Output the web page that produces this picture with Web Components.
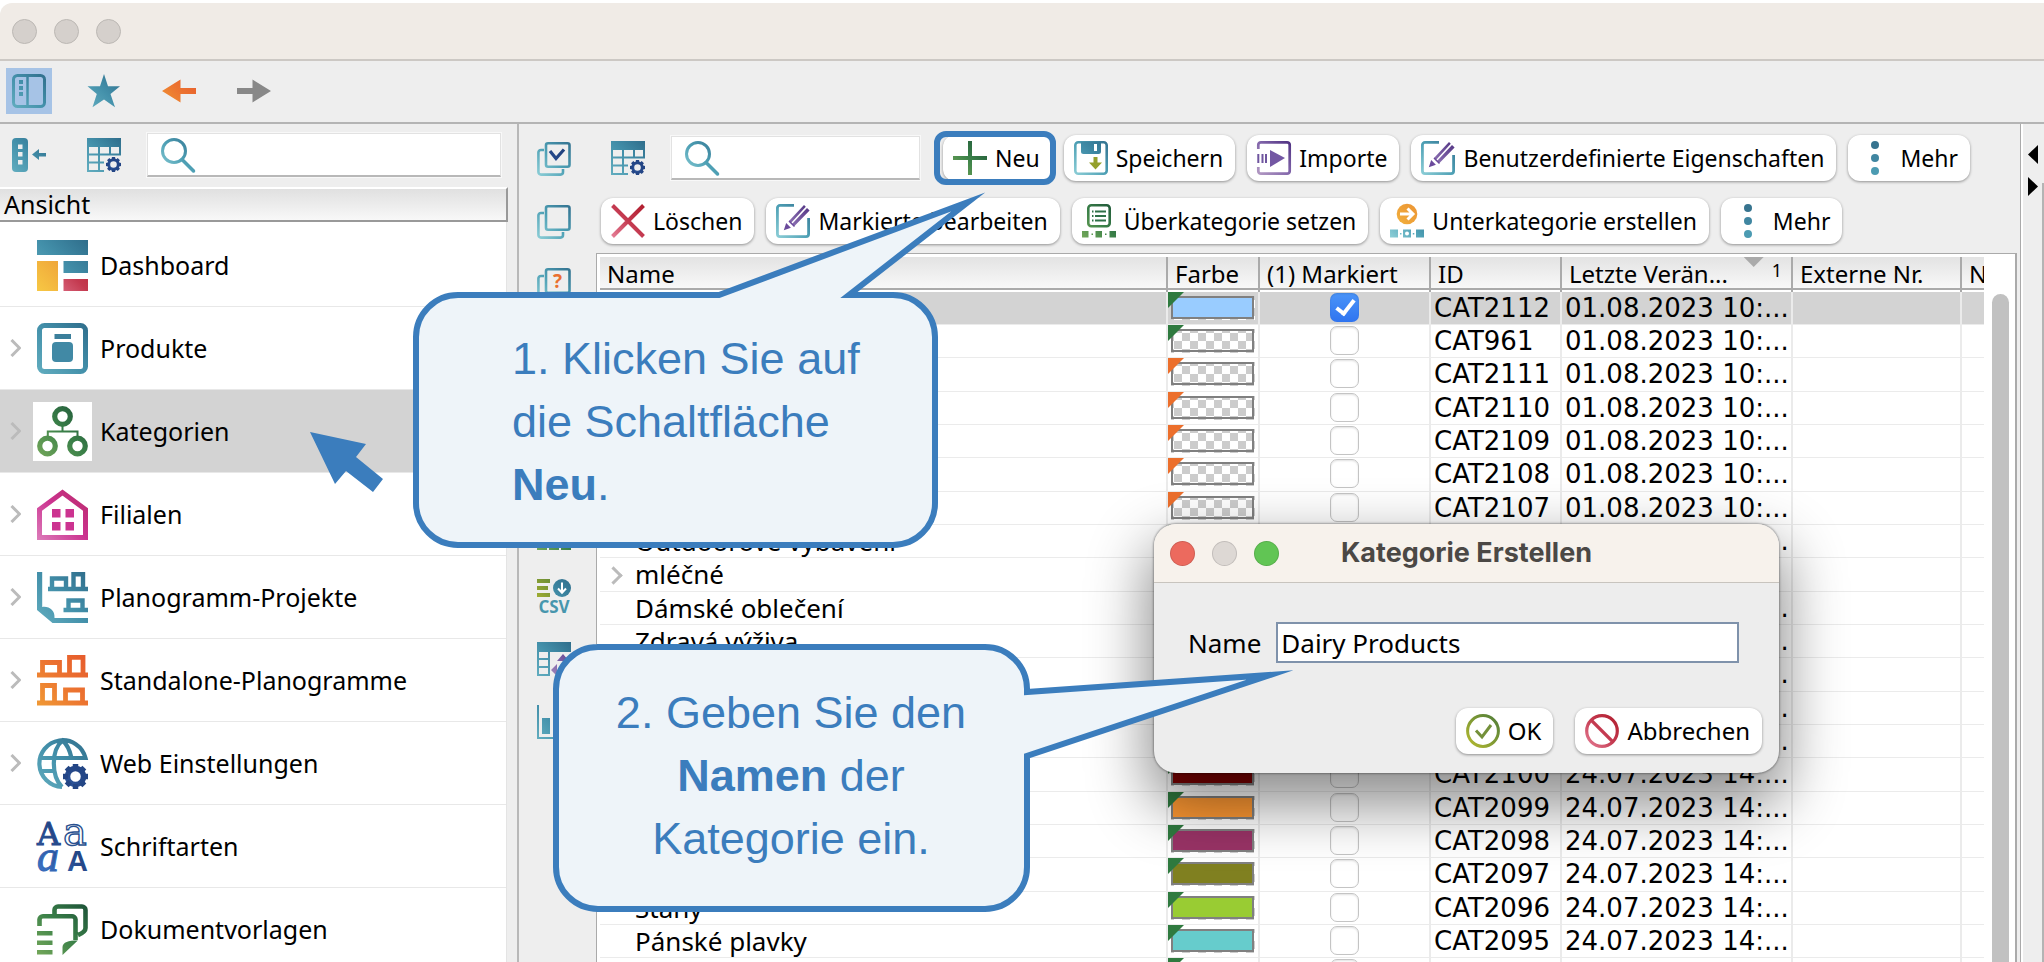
<!DOCTYPE html>
<html lang="de">
<head>
<meta charset="utf-8">
<title>Kategorien</title>
<style>
html, body {
  height: 100%;
  margin: 0;
}
body {
  overflow: hidden;
  background: #fff;
  color: #000;
  font: 25px/32px "Noto Sans", "Open Sans", sans-serif;
}
</style>
</head>
<body>
<app-window>
  <nav-tree slot="nav">
    <nav-item icon="dashboard" leaf>Dashboard</nav-item>
    <nav-item icon="products">Produkte</nav-item>
    <nav-item icon="categories" selected>Kategorien</nav-item>
    <nav-item icon="stores">Filialen</nav-item>
    <nav-item icon="projects">Planogramm-Projekte</nav-item>
    <nav-item icon="standalone">Standalone-Planogramme</nav-item>
    <nav-item icon="web">Web Einstellungen</nav-item>
    <nav-item icon="fonts" leaf>Schriftarten</nav-item>
    <nav-item icon="documents" leaf>Dokumentvorlagen</nav-item>
  </nav-tree>
  <category-panel slot="main"></category-panel>
</app-window>
<category-dialog></category-dialog>
<click-arrow></click-arrow>
<callout-bubble tail="up">1. Klicken Sie auf<br>die Schaltfläche<br><b>Neu</b>.</callout-bubble>
<callout-bubble tail="right">2. Geben Sie den<br><b>Namen</b> der<br>Kategorie ein.</callout-bubble>

<script>
const GEAR = (cx, cy, r, width) => {
  const teeth = [];
  for (let i = 0; i < 8; i++) {
    teeth.push(`<rect x="${cx - r * 0.22}" y="${cy - r}" width="${r * 0.44}" height="${r * 0.4}" transform="rotate(${i * 45} ${cx} ${cy})" fill="url(#navy)"/>`);
  }
  return `<circle cx="${cx}" cy="${cy}" r="${r * 0.64}" fill="none" stroke="url(#navy)" stroke-width="${width}"/>${teeth.join('')}`;
};

const COPIES = `
  <path d="M7 8H4a2.600 2.600 0 0 0-2.600 2.600V30A2.600 2.600 0 0 0 4 32.600H23.500A2.600 2.600 0 0 0 26 30V27" fill="none" stroke="url(#aqua)" stroke-width="2.600"/>
  <rect x="9" y="1.300" width="23.500" height="23.500" rx="2" fill="none" stroke="url(#aqua)" stroke-width="2.600"/>`;

const PENCIL_BOX = `
  <path d="M18 1.400H4A2.600 2.600 0 0 0 1.400 4V30A2.600 2.600 0 0 0 4 32.600H30A2.600 2.600 0 0 0 32.600 30V14" fill="none" stroke="url(#aqua)" stroke-width="2.800"/>
  <path d="M13 17 28 1l1.800 1.800L15 19z M16 20 31 4l2.600 2.600L18.500 22z" fill="url(#purple)"/>
  <path d="M13 17l5.500 5.500M9 25l1.500-4.500 3 3z" stroke="#6b4a9c" stroke-width="1.500" fill="#6b4a9c"/>`;

const SHELVES = `
  <path d="M5.500 20V7.500H22.500V20M32.500 20V2.300H46V20" stroke-width="4.800"/>
  <path d="M0 20H51" stroke-width="5"/>
  <path d="M5.500 47V30.500H17.500V47M28.500 47V35H45.500V47" stroke-width="4.800"/>
  <path d="M0 48H51" stroke-width="5"/>`;

// 34 unit icons are used by toolbars, 51 unit icons by the tree
const ICONS = {
  panel: [34, `<rect x="1.500" y="1.500" width="31" height="31" rx="4" fill="none" stroke="url(#teal)" stroke-width="3"/>
    <path d="M15.500 2V32" stroke="url(#teal)" stroke-width="2.500"/>
    <path d="M7 6h4v4H7zM7 12h4v4H7zM7 18h4v4H7z" fill="url(#teal)"/>`],
  star: [34, `<path d="M17 0l4 12.200h12L23.500 20l4.500 13.200-11-7.700-11.500 7.700L9.800 20 .5 12.200H13z" fill="url(#teal)"/>`],
  back: [34, `<path d="M0 17 18.500 5.500V14H34v6H18.500v8.500z" fill="url(#orange)"/>`],
  forward: [34, `<path d="M34 17 15.500 5.500V14H0v6H15.500v8.500z" fill="#888"/>`],
  collapse: [34, `<rect width="16" height="34" rx="4" fill="url(#teal)"/>
    <path d="M6 6.500h4.500V11H6zM6 14h4.500v4.500H6zM6 22h4.500v4.500H6z" fill="#eee"/>
    <path d="M20 16.500l7-5.500v4h7v3.500h-7V22z" fill="url(#teal)"/>`],
  columns: [34, `<path d="M0 0H34V9H0z" fill="url(#teal)"/>
    <path d="M1 8V33H17M12 8V33M23 8V16.500M33 8V16.500H1M1 24.500H17" fill="none" stroke="url(#teal)" stroke-width="2"/>
    ${GEAR(26.500, 26.500, 7.500, 3)}`],
  search: [34, `<circle cx="13" cy="13" r="11.500" fill="none" stroke="url(#aqua)" stroke-width="3"/>
    <path d="M21 21.500 32.500 33" stroke="url(#aqua)" stroke-width="3.500" stroke-linecap="round"/>`],
  marked: [34, `${COPIES}<path d="M13 9l6 7.500 8-9" fill="none" stroke="url(#navy)" stroke-width="3.200"/>`],
  copies: [34, COPIES],
  unknown: [34, `${COPIES}<text x="20.500" y="20" text-anchor="middle" font-family="Open Sans" font-weight="700" font-size="19" fill="#ea7030">?</text>`],
  boxes: [34, `<rect x="5" y="1" width="23" height="19" rx="2" fill="none" stroke="url(#green)" stroke-width="2.500"/>
    <path d="M0 24h10v10H0zM12 24h10v10H12zM24 24h10v10H24z" fill="url(#green)"/>`],
  csv: [34, `<path d="M0 0H13V4H0zM0 7H11V11H0zM0 14H13V18H0z" fill="url(#olive)"/>
    <circle cx="25" cy="9" r="9" fill="url(#teal)"/>
    <path d="M25 3.500V13M21 9.500l4 4.200 4-4.200" fill="none" stroke="#fff" stroke-width="2"/>
    <text x="17" y="34" text-anchor="middle" font-family="Open Sans" font-weight="700" font-size="17" fill="#4796ad">CSV</text>`],
  layout: [34, `<path d="M0 0H34V10H0z" fill="url(#teal)"/>
    <path d="M1 9V33H12V9M1 17H12M1 25H12" fill="none" stroke="url(#teal)" stroke-width="2"/>
    <path d="M14 28l6-6v12zM26 12l6 7H20zM38 28l-6-6v12z" fill="url(#purple)"/>`],
  chart: [34, `<path d="M1 0V33H34" fill="none" stroke="url(#teal)" stroke-width="2"/>
    <path d="M5 13h8v16H5zM16 5h8v24h-8z" fill="url(#teal)"/>`],
  plus: [34, `<path d="M15 0H19V15H34V19H19V34H15V19H0V15H15z" fill="url(#green)"/>`],
  delete: [34, `<path d="M1.500 1.500 32.500 32.500M32.500 1.500 1.500 32.500" stroke="url(#red)" stroke-width="4"/>`],
  edit: [34, PENCIL_BOX],
  save: [34, `<rect x="1.300" y="1.300" width="31.400" height="31.400" rx="3" fill="none" stroke="url(#aqua)" stroke-width="2.600"/>
    <path d="M7 1H27V10.500A2.500 2.500 0 0 1 24.500 13H9.500A2.500 2.500 0 0 1 7 10.500z" fill="url(#teal)"/>
    <path d="M20 3h3v7h-3z" fill="#fff"/>
    <path d="M19.500 16h4v5.500H28L21.500 28.500 15 21.500h4.500z" fill="#94a02c"/>`],
  import: [34, `<path d="M1.300 8V4A2.600 2.600 0 0 1 4 1.300H30A2.600 2.600 0 0 1 32.700 4V30A2.600 2.600 0 0 1 30 32.700H4A2.600 2.600 0 0 1 1.300 30V26" fill="none" stroke="url(#purple)" stroke-width="2.700"/>
    <path d="M1.300 13V22M5.500 13V22M9 13V22" stroke="#6f559f" stroke-width="2"/>
    <path d="M13 9 28 17 13 26z" fill="#7357a3"/>`],
  dots: [34, `<circle cx="17" cy="4" r="4" fill="#37748f"/><circle cx="17" cy="17" r="4" fill="#4086a1"/><circle cx="17" cy="30" r="4" fill="#4c9bb2"/>`],
  parent: [34, `<rect x="6.300" y="1.300" width="21.400" height="21" rx="3" fill="none" stroke="url(#green)" stroke-width="2.600"/>
    <path d="M13 7.500H24M13 12H24M13 16.500H24M10 7.500h1.500M10 12h1.500M10 16.500h1.500" stroke="#2f7048" stroke-width="2"/>
    <path d="M0 27h6.500v6.500H0zM13.500 27H20v6.500h-6.500zM27.500 27H34v6.500h-6.500zM9.500 29.500h1.500V31H9.500zM23 29.500h1.500V31H23z" fill="url(#green)"/>`],
  child: [34, `<circle cx="17" cy="10" r="10.300" fill="url(#amber)"/>
    <path d="M10 10H22M17.500 4.500 23 10l-5.500 5.500" fill="none" stroke="#fff" stroke-width="3"/>
    <path d="M0 25.500h8v8H0zM13 25.500h8v8H13zM26 25.500h8v8H26zM10 29h1.500v1.500H10zM22.800 29h1.500v1.500h-1.500z" fill="url(#aqua)"/>
    <circle cx="17" cy="29.500" r="2" fill="#fff"/>`],
  ok: [34, `<circle cx="17" cy="17" r="15.400" fill="none" stroke="url(#olive)" stroke-width="3"/>
    <path d="M10 16.500l6 6.500 9-12" fill="none" stroke="#74903a" stroke-width="3"/>`],
  cancel: [34, `<circle cx="17" cy="17" r="15.300" fill="none" stroke="url(#red)" stroke-width="3.200"/>
    <path d="M6.500 6.500 27.500 27.500" stroke="url(#red)" stroke-width="3.200"/>`],

  dashboard: [51, `<path d="M0 0H51V15H0zM26.500 21H51V33H26.500z" fill="url(#teal)"/>
    <path d="M0 21H21V51H0z" fill="url(#amber)"/><path d="M26.500 39H51V51H26.500z" fill="url(#red)"/>`],
  products: [51, `<rect x="2.500" y="2.500" width="46" height="46" rx="5" fill="none" stroke="url(#teal)" stroke-width="5"/>
    <path d="M17.500 11h16.500v5H17.500z" fill="#3b7f9b"/><rect x="15" y="19" width="21" height="20" rx="4" fill="#4189a5"/>`],
  categories: [51, `<g fill="none" stroke="url(#green)"><path d="M25.500 19V25.500M10.800 32V25.500H40.500V32" stroke-width="2"/>
    <circle cx="25.500" cy="10.500" r="7.800" stroke-width="5.200"/><circle cx="10.500" cy="40" r="7.800" stroke-width="5.200"/><circle cx="40.500" cy="40" r="7.800" stroke-width="5.200"/></g>`],
  stores: [51, `<path d="M2.500 48.500V20.500L25.500 3.500 48.500 20.500V48.500z" fill="none" stroke="url(#pink)" stroke-width="5"/>
    <path d="M15 20h8.500v8.500H15zM28.500 20H37v8.500h-8.500zM15 33h8.500v8.500H15zM28.500 33H37v8.500h-8.500z" fill="#cc3390"/>`],
  projects: [51, `<path d="M0 0H5.200V35C12 34 18 38 17.500 46H51V51H15.500L0 38z" fill="url(#teal)"/>
    <g fill="none" stroke="url(#teal)"><path d="M15 15V6.500H29V15M36.500 15V2.300H46V15M31.500 36V28.500H45.500V36" stroke-width="4.400"/>
    <path d="M11 17H51M26.500 38H51" stroke-width="4.500"/></g>`],
  standalone: [51, `<g fill="none" stroke="url(#orange)">${SHELVES}</g>`],
  web: [51, `<g fill="none" stroke="url(#teal)" stroke-width="4.200"><path d="M25 49A23.400 23.400 0 1 1 48.500 20H3.500M3 33H16.500M25 49C14 38 14 12 25.500 2.500C31 7 33 13 34.500 20"/></g>
    ${GEAR(38.500, 38.500, 12.500, 5.500)}`],
  fonts: [51, `<g fill="url(#navy)"><text x="0" y="23.500" font-family="DejaVu Serif" font-size="32" stroke="#25488a">A</text>
    <text x="26" y="23.500" font-family="DejaVu Serif" font-size="40" fill="none" stroke="#28508f" stroke-width="1.400">a</text>
    <text x="0" y="50" font-family="Liberation Serif" font-style="italic" font-size="44" stroke="#3569b8">a</text>
    <text x="30" y="50" font-family="Liberation Sans" font-weight="700" font-size="29">A</text></g>`],
  documents: [51, `<g fill="none" stroke="url(#green)" stroke-width="4.600"><path d="M17.500 11V6A3.500 3.500 0 0 1 21 2.500H45A3.500 3.500 0 0 1 48.500 6V24Q48.500 28 41 31M2.500 22V15.500A3.500 3.500 0 0 1 6 12.300H34.500A3.500 3.500 0 0 1 38.500 15.500V36"/></g>
    <path d="M0 27H15.500V31.500H0zM0 36.500H15.500V41H0zM0 46H15.500V50.500H0zM25.500 51V43C26 38 31 36.500 40.800 36.500z" fill="url(#green)"/>`],
};

const GRADIENTS = {
  teal: ['#2f6d8b', '#4390aa', '#62adbf'],
  aqua: ['#33718f', '#4d9fb4', '#8fd0d8'],
  navy: ['#1d3c72', '#25488a', '#3e78cc'],
  purple: ['#4d2f80', '#8367ab', '#b59cc4'],
  orange: ['#e65a2c', '#ec7430', '#f09a35'],
  amber: ['#eb9033', '#efa63a', '#f7c844'],
  red: ['#b01c2c', '#c43a50', '#e8849c'],
  green: ['#1d5238', '#3a8048', '#74a85a'],
  olive: ['#4a7a3a', '#809a34', '#bcbe30'],
  pink: ['#b82a68', '#cc3390', '#dc7cba'],
};

class UiIcon extends HTMLElement {
  constructor() {
    super();
    this.attachShadow({ mode: 'open' });
  }
  connectedCallback() {
    const [size, shapes] = ICONS[this.getAttribute('name')];
    const defs = Object.entries(GRADIENTS).map(([id, [from, mid, to]]) => `
      <linearGradient id="${id}" gradientUnits="userSpaceOnUse" x1="${size}" y1="0" x2="0" y2="${size}">
        <stop offset="0" stop-color="${from}"/><stop offset=".5" stop-color="${mid}"/><stop offset="1" stop-color="${to}"/>
      </linearGradient>`).join('');
    this.shadowRoot.innerHTML = `
      <style>
      :host {
        display: block;
        flex: none;
      }
      svg {
        display: block;
        overflow: visible;
      }
      </style>
      <svg width="${size}" height="${size}" viewBox="0 0 ${size} ${size}" aria-hidden="true"><defs>${defs}</defs>${shapes}</svg>`;
  }
}
customElements.define('ui-icon', UiIcon);

// attaches an open shadow root holding a copy of the class's template
class TemplateElement extends HTMLElement {
  constructor() {
    super();
    const templateEl = document.createElement('template');
    templateEl.innerHTML = this.constructor.html;
    this.attachShadow({ mode: 'open' }).append(templateEl.content.cloneNode(true));
  }
}

class IconButton extends TemplateElement {
  static html = `
  <style>
  :host {
    display: block;
    flex: none;
  }
  button {
    display: block;
    padding: 6px;
    border: 0;
    background: none;
  }
  :host([flat]) button {
    padding: 0;
  }
  :host([pressed]) button {
    background: #a6c3e6;
  }
  </style>
  <button type="button"></button>`;
  connectedCallback() {
    const button = this.shadowRoot.querySelector('button');
    button.setAttribute('aria-label', this.getAttribute('label'));
    button.innerHTML = `<ui-icon name="${this.getAttribute('icon')}"></ui-icon>`;
  }
}
customElements.define('icon-button', IconButton);

class ToolButton extends TemplateElement {
  static html = `
  <style>
  :host {
    display: block;
    position: relative;
    flex: none;
  }
  button {
    display: flex;
    align-items: center;
    gap: 8px;
    height: 46px;
    padding: 0 12px 0 10px;
    border: 0;
    border-radius: 12px;
    background: #fff;
    box-shadow: 0 1px 3px rgba(0, 0, 0, .4);
    color: inherit;
    font: inherit;
    white-space: nowrap;
  }
  :host([highlight])::after {
    content: "";
    position: absolute;
    inset: -4px -4px -4px -9px;
    border: 6px solid #3b7dbd;
    border-radius: 12px;
    box-sizing: border-box;
  }
  </style>
  <button type="button"><span class="icon"></span><span><slot></slot></span></button>`;
  connectedCallback() {
    this.shadowRoot.querySelector('.icon').innerHTML = `<ui-icon name="${this.getAttribute('icon')}"></ui-icon>`;
  }
}

class SearchField extends TemplateElement {
  static html = `
  <style>
  :host {
    display: flex;
    align-items: center;
    gap: 8px;
    box-sizing: border-box;
    height: 44px;
    padding: 0 13px;
    border: 1px solid #e2e2e2;
    border-bottom: 2px solid #b8b8b8;
    background: #fff;
    box-shadow: 0 0 0 1px #f8f8f8;
  }
  input {
    flex: 1;
    min-width: 0;
    border: 0;
    outline: 0;
    padding: 0;
    background: none;
    font: inherit;
  }
  </style>
  <ui-icon name="search"></ui-icon>
  <input type="text" aria-label="Suchen">`;
}
customElements.define('search-field', SearchField);

class NavItem extends TemplateElement {
  static html = `
  <style>
  :host {
    display: block;
    box-sizing: border-box;
    height: 83px;
    border-bottom: 1px solid #e8e8e8;
  }
  :host([selected]) {
    background: #d3d3d3;
  }
  a {
    display: flex;
    align-items: center;
    height: 100%;
    padding-left: 10px;
    color: inherit;
    text-decoration: none;
  }
  .chevron {
    width: 11px;
    height: 18px;
    margin-right: 12px;
    fill: none;
    stroke: #bbb;
    stroke-width: 3;
  }
  :host([leaf]) .chevron {
    visibility: hidden;
  }
  .icon {
    padding: 4px;
    margin-right: 8px;
  }
  :host([selected]) .icon {
    background: #fff;
  }
  </style>
  <a href="#">
    <svg class="chevron" viewBox="0 0 11 18"><path d="M1.500 1 9.500 9 1.500 17"/></svg>
    <span class="icon"></span>
    <slot></slot>
  </a>`;
  connectedCallback() {
    this.shadowRoot.querySelector('.icon').innerHTML = `<ui-icon name="${this.getAttribute('icon')}"></ui-icon>`;
  }
}

class NavTree extends TemplateElement {
  static html = `
  <style>
  :host {
    display: block;
    height: 100%;
  }
  .tools {
    display: flex;
    align-items: center;
    gap: 26px;
    padding: 9px 16px 10px 12px;
  }
  .tools icon-button + icon-button {
    margin-left: 15px;
  }
  search-field {
    flex: 1;
    min-width: 0;
  }
  header {
    box-sizing: border-box;
    height: 35px;
    margin-right: 9px;
    padding-left: 4px;
    border: solid #999;
    border-width: 0 2px 2px 0;
    border-top: 2px solid #fff;
    background: linear-gradient(#e0e0e0, #f8f8f8);
    line-height: 30px;
  }
  nav {
    margin-right: 10px;
    padding-top: 2px;
    border-right: 1px solid #e4e4e4;
    background: #fff;
  }
  </style>
  <div class="tools">
    <icon-button flat icon="collapse" label="Einklappen"></icon-button>
    <icon-button flat icon="columns" label="Spalten"></icon-button>
    <search-field></search-field>
  </div>
  <header>Ansicht</header>
  <nav><slot></slot></nav>`;
}

class CategoryTable extends TemplateElement {
  static html = `
  <style>
  :host {
    display: flex;
    box-sizing: border-box;
    border: 1px solid #aaa;
    border-width: 1px 2px 0 1px;
    padding: 3px 0 0 3px;
    background: #fff;
    overflow: hidden;
  }
  .rows {
    flex: 1;
    min-width: 0;
    overflow: hidden;
  }
  table {
    width: 100%;
    table-layout: fixed;
    border-spacing: 0;
  }
  th, td {
    box-sizing: border-box;
    padding: 0;
    white-space: nowrap;
    text-align: left;
    vertical-align: top;
  }
  th {
    height: 35px;
    padding-left: 7px;
    background: linear-gradient(#e3e3e3, #f8f8f8 31px, #aaa 31px, #aaa 33px, #fff 33px);
    font-size: 24px;
    font-weight: 400;
    line-height: 33px;
  }
  th + th {
    border-left: 2px solid #aaa;
  }
  td {
    height: 33px;
    border-bottom: 1px solid #ebebeb;
    line-height: 32px;
  }
  tr:nth-child(3n) td {
    height: 34px;
  }
  td + td {
    border-left: 2px solid #ebebeb;
  }
  tr.selected td {
    background: #d3d3d3;
  }
  .farbe { width: 92px; }
  .markiert { width: 171px; }
  .id { width: 131px; }
  .datum { width: 231px; }
  .extern { width: 169px; }
  .rest { width: 24px; }
  td.name {
    padding-left: 35px;
    font-size: 26px;
  }
  td.number {
    padding-left: 3px;
    font: 26px/32px "DejaVu Sans", sans-serif;
  }
  .parent::before {
    content: "";
    display: inline-block;
    width: 13px;
    height: 13px;
    margin: 0 15px 2px -28px;
    border: solid #bbb;
    border-width: 3px 3px 0 0;
    box-sizing: border-box;
    transform: rotate(45deg);
  }
  .swatch {
    box-sizing: border-box;
    width: 84px;
    height: 24px;
    margin: 4px 0 0 3px;
    padding: 0 1px 1px 0;
    background: repeating-conic-gradient(#ccc 0 25%, #fff 0 50%) 3px 4px / 16px 16px;
  }
  .swatch i {
    display: block;
    box-sizing: border-box;
    height: 23px;
    border: 2px solid #808080;
    background: var(--fill, none);
  }
  .farbe-cell {
    position: relative;
  }
  .farbe-cell::after {
    content: "";
    position: absolute;
    left: 0;
    top: 0;
    width: 16px;
    height: 16px;
    background: var(--flag);
    clip-path: polygon(0 0, 100% 0, 0 100%);
  }
  input {
    display: block;
    appearance: none;
    box-sizing: border-box;
    width: 29px;
    height: 29px;
    margin: 1px auto 0;
    border: 1px solid #c4c4c4;
    border-radius: 7px;
    background: rgba(255, 255, 255, .8);
    box-shadow: inset 0 1px 2px rgba(0, 0, 0, .12);
  }
  input:checked {
    border: 0;
    background: linear-gradient(#4a94f8, #2f74f0);
  }
  input:checked::before {
    content: "";
    display: block;
    box-sizing: border-box;
    width: 11px;
    height: 19px;
    margin: 3px 0 0 10px;
    border: solid #fff;
    border-width: 0 4px 4px 0;
    transform: rotate(38deg);
  }
  .sort {
    float: right;
    display: flex;
    gap: 8px;
    margin-right: 9px;
    font-size: 18px;
    line-height: 26px;
  }
  .sort::before {
    content: "";
    width: 20px;
    height: 10px;
    background: #aaa;
    clip-path: polygon(0 0, 100% 0, 50% 100%);
  }
  .scrollbar {
    width: 17px;
    margin: 37px 6px 0 8px;
    border-radius: 9px 9px 0 0;
    background: #c1c1c1;
  }
  </style>
  <div class="rows">
    <table>
      <thead><tr>
        <th>Name</th>
        <th class="farbe">Farbe</th>
        <th class="markiert">(1) Markiert</th>
        <th class="id">ID</th>
        <th class="datum"><span class="sort">1</span>Letzte Verän...</th>
        <th class="extern">Externe Nr.</th>
        <th class="rest">N</th>
      </tr></thead>
      <tbody></tbody>
    </table>
  </div>
  <div class="scrollbar"></div>`;

  connectedCallback() {
    const august = '01.08.2023 10:...';
    const july = '24.07.2023 14:...';
    const green = '#2f7a3f';
    const orange = '#ec6f2c';
    // name, id, date, flag, fill
    const rows = [
      ['', 'CAT2112', august, green, '#99ccff'],
      ['', 'CAT961', august, green],
      ['', 'CAT2111', august, orange],
      ['', 'CAT2110', august, orange],
      ['', 'CAT2109', august, orange],
      ['', 'CAT2108', august, orange],
      ['', 'CAT2107', august, orange],
      ['Outdoorové vybavení', '', july, green],
      ['mléčné', '', '', green],
      ['Dámské oblečení', '', july, green],
      ['Zdravá výživa', '', july, green],
      ['', '', july, green],
      ['', '', july, green],
      ['', '', july, green],
      ['', 'CAT2100', july, green, '#800000'],
      ['', 'CAT2099', july, green, '#ff9933'],
      ['', 'CAT2098', july, green, '#993366'],
      ['', 'CAT2097', july, green, '#808020'],
      ['Stany', 'CAT2096', july, green, '#99cc33'],
      ['Pánské plavky', 'CAT2095', july, green, '#66cccc'],
      ['', '', '', green],
    ];
    this.shadowRoot.querySelector('tbody').innerHTML = rows.map(([name, id, date, flag, fill], i) => `
      <tr${i === 0 ? ' class="selected"' : ''}>
        <td class="name${name === 'mléčné' ? ' parent' : ''}">${name}</td>
        <td class="farbe-cell" style="--flag: ${flag}"><div class="swatch"><i${fill ? ` style="--fill: ${fill}"` : ''}></i></div></td>
        <td><input type="checkbox" aria-label="Markiert"${i === 0 ? ' checked' : ''}></td>
        <td class="number">${id}</td>
        <td class="number">${date}</td>
        <td></td>
        <td></td>
      </tr>`).join('');
  }
}
customElements.define('category-table', CategoryTable);

class CategoryPanel extends TemplateElement {
  static html = `
  <style>
  :host {
    display: flex;
    height: 100%;
    box-sizing: border-box;
    border-left: 2px solid #b8b8b8;
    border-right: 1px solid #aaa;
  }
  .strip {
    display: flex;
    flex-direction: column;
    gap: 27px;
    flex: none;
    width: 59px;
    padding: 18px 0 0 18px;
  }
  .strip div {
    display: flex;
    flex-direction: column;
    gap: 29px;
  }
  .content {
    display: flex;
    flex-direction: column;
    flex: 1;
    min-width: 0;
    margin-right: 3px;
  }
  .bar {
    display: flex;
    align-items: center;
    gap: 12px;
    padding: 11px 0 0 5px;
    font-size: 23px;
  }
  .bar + .bar {
    padding: 17px 0 9px 5px;
  }
  .bar icon-button {
    margin: 0 14px 0 10px;
  }
  search-field {
    width: 249px;
    margin-right: 11px;
  }
  category-table {
    flex: 1;
    min-height: 0;
  }
  </style>
  <div class="strip">
    <div>
      <icon-button flat icon="marked" label="Markierte anzeigen"></icon-button>
      <icon-button flat icon="copies" label="Alle anzeigen"></icon-button>
      <icon-button flat icon="unknown" label="Unbekannte anzeigen"></icon-button>
    </div>
    <div>
      <icon-button flat icon="save" label="Speichern"></icon-button>
      <icon-button flat icon="edit" label="Bearbeiten"></icon-button>
      <icon-button flat icon="parent" label="Hierarchie"></icon-button>
    </div>
    <div>
      <icon-button flat icon="boxes" label="Elemente"></icon-button>
      <icon-button flat icon="csv" label="Als Tabelle exportieren"></icon-button>
      <icon-button flat icon="layout" label="Layout"></icon-button>
      <icon-button flat icon="chart" label="Diagramm"></icon-button>
    </div>
  </div>
  <div class="content">
    <div class="bar">
      <icon-button flat icon="columns" label="Spalten"></icon-button>
      <search-field></search-field>
      <tool-button icon="plus" highlight>Neu</tool-button>
      <tool-button icon="save">Speichern</tool-button>
      <tool-button icon="import">Importe</tool-button>
      <tool-button icon="edit">Benutzerdefinierte Eigenschaften</tool-button>
      <tool-button icon="dots">Mehr</tool-button>
    </div>
    <div class="bar">
      <tool-button icon="delete">Löschen</tool-button>
      <tool-button icon="edit">Markierte bearbeiten</tool-button>
      <tool-button icon="parent">Überkategorie setzen</tool-button>
      <tool-button icon="child">Unterkategorie erstellen</tool-button>
      <tool-button icon="dots">Mehr</tool-button>
    </div>
    <category-table></category-table>
  </div>`;
}

class AppWindow extends TemplateElement {
  static html = `
  <style>
  :host {
    display: grid;
    grid-template: auto auto minmax(0, 1fr) / 517px minmax(0, 1fr) 23px;
    box-sizing: border-box;
    height: 100vh;
    padding-top: 3px;
    overflow: hidden;
  }
  .title {
    grid-column: 1 / -1;
    display: flex;
    align-items: center;
    gap: 17px;
    height: 56px;
    padding: 0 12px;
    border-bottom: 2px solid #ccc8c4;
    border-radius: 12px 0 0 0;
    background: #f0ebe6;
  }
  .title i {
    box-sizing: border-box;
    width: 25px;
    height: 25px;
    border: 1px solid #bcb8b4;
    border-radius: 50%;
    background: #d5d0cc;
  }
  .tools {
    grid-column: 1 / -1;
    display: flex;
    gap: 29px;
    height: 46px;
    padding: 7px 6px 8px;
    border-bottom: 2px solid #b4b4b4;
    background: #eee;
  }
  .nav, .main {
    min-height: 0;
    background: #eee;
    overflow: hidden;
  }
  .edge {
    display: flex;
    flex-direction: column;
    align-items: flex-start;
    gap: 13px;
    box-sizing: border-box;
    padding: 21px 0 0 5px;
    border-left: 2px solid #fff;
    background: #eee;
  }
  .edge::after {
    content: "";
    flex: 1;
    align-self: flex-end;
    width: 2px;
    margin-top: -26px;
    background: #b4b4b4;
  }
  .edge button {
    width: 10px;
    height: 19px;
    padding: 0;
    border: 0;
    background: #000;
    clip-path: polygon(100% 0, 100% 100%, 0 50%);
  }
  .edge button + button {
    clip-path: polygon(0 0, 100% 50%, 0 100%);
  }
  </style>
  <div class="title"><i></i><i></i><i></i></div>
  <div class="tools">
    <icon-button pressed icon="panel" label="Ansicht ein- und ausblenden"></icon-button>
    <icon-button icon="star" label="Favoriten"></icon-button>
    <icon-button icon="back" label="Zurück"></icon-button>
    <icon-button icon="forward" label="Vorwärts"></icon-button>
  </div>
  <div class="nav"><slot name="nav"></slot></div>
  <div class="main"><slot name="main"></slot></div>
  <div class="edge">
    <button type="button" aria-label="Öffnen"></button>
    <button type="button" aria-label="Schließen"></button>
  </div>`;
}

class CategoryDialog extends TemplateElement {
  static html = `
  <style>
  :host {
    position: absolute;
    left: 1154px;
    top: 524px;
    width: 625px;
  }
  dialog {
    position: static;
    width: auto;
    margin: 0;
    padding: 0;
    border: 0;
    border-radius: 22px;
    background: #ededed;
    box-shadow: 0 0 2px 1px rgba(0, 0, 0, .3), 0 26px 60px 6px rgba(0, 0, 0, .45);
    color: inherit;
  }
  header {
    display: grid;
    grid-template-columns: 1fr auto 1fr;
    align-items: center;
    height: 58px;
    padding: 0 16px;
    border-bottom: 1px solid #c8c4be;
    border-radius: 22px 22px 0 0;
    background: #f7f2ec;
  }
  .lights {
    display: flex;
    gap: 17px;
  }
  .lights i {
    box-sizing: border-box;
    width: 25px;
    height: 25px;
    border: 1px solid rgba(0, 0, 0, .12);
    border-radius: 50%;
    background: #ec6a5e;
  }
  .lights i:nth-child(2) { background: #ddd8d4; }
  .lights i:nth-child(3) { background: #61c554; }
  h2 {
    margin: 0;
    color: #4b4845;
    font: 700 27px/32px Inter, sans-serif;
  }
  .field {
    display: flex;
    align-items: center;
    gap: 15px;
    padding: 39px 40px 45px 34px;
    font-size: 26px;
  }
  input {
    flex: 1;
    min-width: 0;
    box-sizing: border-box;
    height: 41px;
    padding: 0 3px;
    border: 2px solid #7f92ab;
    outline: 0;
    font: inherit;
  }
  .actions {
    display: flex;
    justify-content: flex-end;
    gap: 22px;
    padding: 0 17px 19px;
    font-size: 24px;
  }
  </style>
  <dialog open aria-labelledby="title">
    <header>
      <div class="lights"><i></i><i></i><i></i></div>
      <h2 id="title">Kategorie Erstellen</h2>
    </header>
    <div class="field">
      <label for="name">Name</label>
      <input type="text" id="name" value="Dairy Products">
    </div>
    <div class="actions">
      <tool-button icon="ok">OK</tool-button>
      <tool-button icon="cancel">Abbrechen</tool-button>
    </div>
  </dialog>`;
}

class ClickArrow extends TemplateElement {
  static html = `
  <style>
  :host {
    position: absolute;
    left: 310px;
    top: 432px;
  }
  svg {
    display: block;
  }
  </style>
  <svg width="74" height="60" viewBox="0 0 74 60" aria-hidden="true">
    <path d="M0 0 56 12 46 25 73 47 63 60 36 39 25 52z" fill="#3b7dbd"/>
  </svg>`;
}

const BUBBLES = {
  up: {
    viewBox: '413 192 573 356', width: 573, height: 356,
    d: 'M458 295H719L968 202 849 295H893A42 42 0 0 1 935 337V503A42 42 0 0 1 893 545H458A42 42 0 0 1 416 503V337A42 42 0 0 1 458 295Z',
  },
  right: {
    viewBox: '553 644 742 268', width: 742, height: 268,
    d: 'M597 647H985A42 42 0 0 1 1027 689V692L1270 675 1027 756V867A42 42 0 0 1 985 909H598A42 42 0 0 1 556 867V689A42 42 0 0 1 598 647Z',
  },
};

class CalloutBubble extends TemplateElement {
  static html = `
  <style>
  :host {
    position: absolute;
    color: #3b7dbd;
    font: 45px/63px "Liberation Sans", Arial, sans-serif;
    white-space: nowrap;
  }
  :host([tail="up"]) {
    left: 413px;
    top: 192px;
  }
  :host([tail="right"]) {
    left: 553px;
    top: 644px;
  }
  svg {
    display: block;
    fill: #eef4f9;
    stroke: #3b7dbd;
    stroke-width: 6;
    stroke-miterlimit: 20;
  }
  .text {
    position: absolute;
    left: 0;
    bottom: 0;
    box-sizing: border-box;
  }
  :host([tail="up"]) .text {
    padding: 0 0 32px 99px;
  }
  :host([tail="right"]) .text {
    width: 476px;
    padding-bottom: 42px;
    text-align: center;
  }
  </style>
  <svg aria-hidden="true"><path/></svg>
  <div class="text"><slot></slot></div>`;
  connectedCallback() {
    const bubble = BUBBLES[this.getAttribute('tail')];
    const svg = this.shadowRoot.querySelector('svg');
    svg.setAttribute('width', bubble.width);
    svg.setAttribute('height', bubble.height);
    svg.setAttribute('viewBox', bubble.viewBox);
    svg.firstChild.setAttribute('d', bubble.d);
  }
}

customElements.define('tool-button', ToolButton);
customElements.define('nav-item', NavItem);
customElements.define('nav-tree', NavTree);
customElements.define('category-panel', CategoryPanel);
customElements.define('app-window', AppWindow);
customElements.define('category-dialog', CategoryDialog);
customElements.define('click-arrow', ClickArrow);
customElements.define('callout-bubble', CalloutBubble);
</script>
</body>
</html>
